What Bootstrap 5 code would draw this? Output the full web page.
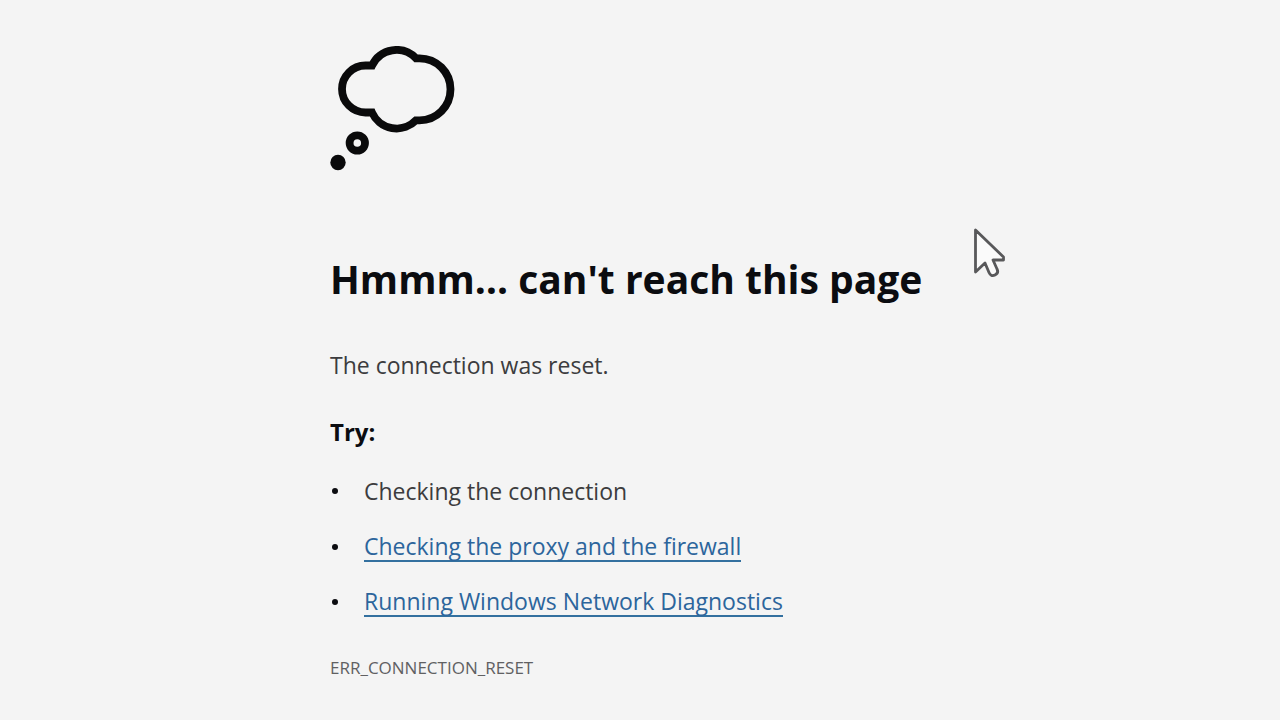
<!DOCTYPE html>
<html lang="en">
<head>
<meta charset="utf-8">
<meta name="viewport" content="width=device-width, initial-scale=1">
<title>Can't reach this page</title>
<link href="https://cdn.jsdelivr.net/npm/bootstrap@5.3.0/dist/css/bootstrap.min.css" rel="stylesheet">
<style>
  body { background: #f4f4f4; color: #0b0c10; font-family: "Open Sans", "Noto Sans", sans-serif; font-size: 23px; line-height: 32px; }
  .error-page { max-width: 620px; padding-top: 46px; }
  .thought { width: 126px; height: 126px; margin-bottom: 79px; }
  h1 { font-size: 39px; line-height: 56px; font-weight: 700; margin-bottom: 42px; }
  .soft-text { color: #3c3c3e; }
  .try-label { font-size: 24px; line-height: 32px; margin: 35px 0 27px; }
  .tips { gap: 25px; margin-bottom: 39px; }
  .tips li { display: flex; align-items: center; gap: 26px; }
  .tips li::before { content: ""; flex: none; width: 6px; height: 6px; margin-left: 2px; border-radius: 50%; background: #0b0c10; }
  .tips a { color: #2c659c; line-height: 28px; border-bottom: 2px solid #33709f; }
  .error-code { font-size: 17px; line-height: 24px; color: #606062; }
  .pointer { left: 972px; top: 226px; }
</style>
</head>
<body>
<main class="error-page mx-auto">
  <svg class="thought d-block" viewBox="0 0 126 126" fill="none" stroke="#0a0a0b" stroke-width="7.8" aria-hidden="true">
    <path d="M42 19.500H35.500A23.500 23.500 0 0 0 35.500 66.500H42A27 27 0 0 0 86 74.300H89.500A31 31 0 0 0 89.500 12.300H86A27 27 0 0 0 42 19.500Z"/>
    <circle cx="27.300" cy="97" r="7.700"/>
    <circle cx="8" cy="116.500" r="7.700" fill="#0a0a0b" stroke="none"/>
  </svg>
  <h1>Hmmm… can't reach this page</h1>
  <p class="soft-text mb-0">The connection was reset.</p>
  <h2 class="try-label fw-bold">Try:</h2>
  <ul class="tips list-unstyled d-flex flex-column">
    <li><span class="soft-text">Checking the connection</span></li>
    <li><a class="text-decoration-none" href="#proxy">Checking the proxy and the firewall</a></li>
    <li><a class="text-decoration-none" href="#diagnostics">Running Windows Network Diagnostics</a></li>
  </ul>
  <p class="error-code mb-0">ERR_CONNECTION_RESET</p>
</main>
<svg class="pointer position-absolute" width="36" height="54" viewBox="0 0 36 54" aria-hidden="true">
  <path d="M3.500 4V46L13 37L17 46.500Q19 51 23 49Q27 47 25 43L21 34H31.500V31Z" fill="#fafafa" stroke="#58585a" stroke-width="2.800" stroke-linejoin="round"/>
</svg>
<script src="https://cdn.jsdelivr.net/npm/bootstrap@5.3.0/dist/js/bootstrap.bundle.min.js"></script>
</body>
</html>
